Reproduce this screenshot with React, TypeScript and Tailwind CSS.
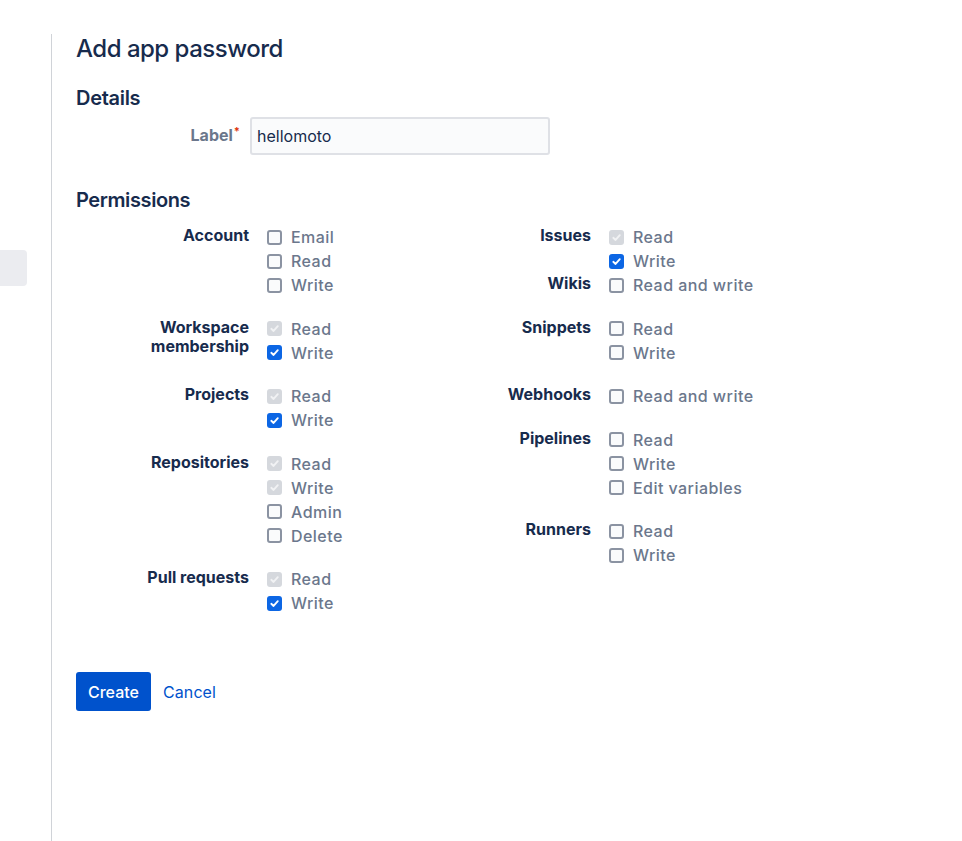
import React from "react";

type Opt = { label: string; state: "off" | "on" | "disabled" };
type Group = { title: string[]; opts: Opt[]; gap?: boolean };

const left: Group[] = [
  { title: ["Account"], opts: [{ label: "Email", state: "off" }, { label: "Read", state: "off" }, { label: "Write", state: "off" }] },
  { title: ["Workspace", "membership"], opts: [{ label: "Read", state: "disabled" }, { label: "Write", state: "on" }], gap: true },
  { title: ["Projects"], opts: [{ label: "Read", state: "disabled" }, { label: "Write", state: "on" }], gap: true },
  {
    title: ["Repositories"],
    opts: [
      { label: "Read", state: "disabled" },
      { label: "Write", state: "disabled" },
      { label: "Admin", state: "off" },
      { label: "Delete", state: "off" },
    ],
    gap: true,
  },
  { title: ["Pull requests"], opts: [{ label: "Read", state: "disabled" }, { label: "Write", state: "on" }], gap: true },
];

const right: Group[] = [
  { title: ["Issues"], opts: [{ label: "Read", state: "disabled" }, { label: "Write", state: "on" }] },
  { title: ["Wikis"], opts: [{ label: "Read and write", state: "off" }] },
  { title: ["Snippets"], opts: [{ label: "Read", state: "off" }, { label: "Write", state: "off" }], gap: true },
  { title: ["Webhooks"], opts: [{ label: "Read and write", state: "off" }], gap: true },
  {
    title: ["Pipelines"],
    opts: [
      { label: "Read", state: "off" },
      { label: "Write", state: "off" },
      { label: "Edit variables", state: "off" },
    ],
    gap: true,
  },
  { title: ["Runners"], opts: [{ label: "Read", state: "off" }, { label: "Write", state: "off" }], gap: true },
];

function Box({ state }: { state: Opt["state"] }) {
  if (state === "off") {
    return <span className="block w-[15px] h-[15px] rounded-[3px] border-2 border-[#8b93a2] bg-[#fafbfc]" />;
  }
  const bg = state === "on" ? "bg-[#0c66e4]" : "bg-[#d5d8dd]";
  const stroke = state === "on" ? "#ffffff" : "#f1f2f4";
  return (
    <span className={`flex items-center justify-center w-[15px] h-[15px] rounded-[3px] ${bg}`}>
      <svg width="11" height="11" viewBox="0 0 12 12" fill="none">
        <path d="M2.5 6.3 L5 8.7 L9.6 3.4" stroke={stroke} strokeWidth="2" strokeLinecap="round" strokeLinejoin="round" />
      </svg>
    </span>
  );
}

function GroupRow({ g }: { g: Group }) {
  return (
    <div className={`flex ${g.gap ? "mt-[19.5px]" : ""}`}>
      <div className="w-[173px] shrink-0 pt-[1px] text-right font-bold text-[16px] leading-[19px] text-[#172b4d]">
        {g.title.map((t, i) => (
          <div key={i}>{t}</div>
        ))}
      </div>
      <div className="ml-[18px] flex flex-col">
        {g.opts.map((o, i) => (
          <div key={i} className="flex items-center h-[24px]">
            <Box state={o.state} />
            <span className="ml-[9px] text-[16px] leading-[24px] font-medium tracking-[0.45px] text-[#6b778c]">{o.label}</span>
          </div>
        ))}
      </div>
    </div>
  );
}

export default function App() {
  return (
    <div
      className="flex min-h-[841px] bg-white"
      style={{ fontFamily: "Inter, 'Noto Sans', sans-serif" }}
    >
      <div className="w-[51px] shrink-0 pt-[250px]">
        <div className="w-[27px] h-[36px] rounded-r-[4px] bg-[#ebecf0]" />
      </div>
      <div className="mt-[34px] border-l border-[#d0d3d8] pl-[24px] flex-1">
        <h1 className="text-[24px] leading-[30px] font-medium tracking-[-0.5px] text-[#172b4d]">Add app password</h1>
        <h2 className="mt-[22px] text-[20px] leading-[24px] font-semibold tracking-[-0.3px] text-[#172b4d]">Details</h2>
        <div className="mt-[7px] flex items-center">
          <div className="w-[164px] shrink-0 text-right text-[16px] font-bold text-[#6b778c] leading-[20px]">
            Label<span className="relative top-[-6px] ml-[1px] text-[11px] text-[#de350b]">*</span>
          </div>
          <div className="ml-[10px] w-[300px] h-[38px] rounded-[3px] border-2 border-[#dfe1e6] bg-[#fafbfc] flex items-center px-[5px] text-[16px] text-[#172b4d]">
            hellomoto
          </div>
        </div>
        <h2 className="mt-[33px] text-[20px] leading-[24px] font-semibold tracking-[-0.4px] text-[#172b4d]">Permissions</h2>
        <div className="mt-[13px] flex">
          <div className="w-[342px] shrink-0">
            {left.map((g, i) => (
              <GroupRow key={i} g={g} />
            ))}
          </div>
          <div className="w-[342px] shrink-0">
            {right.map((g, i) => (
              <GroupRow key={i} g={g} />
            ))}
          </div>
        </div>
        <div className="mt-[57px] flex items-center">
          <button className="h-[39px] px-[12px] rounded-[3px] bg-[#0052cc] text-white text-[16px] font-medium">
            Create
          </button>
          <button className="ml-[12px] text-[16px] text-[#0052cc] tracking-[0.1px]">Cancel</button>
        </div>
      </div>
    </div>
  );
}
